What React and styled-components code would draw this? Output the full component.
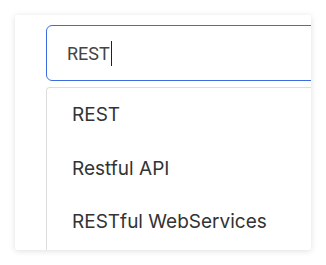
import React from "react";
import styled, { createGlobalStyle } from "styled-components";

const Global = createGlobalStyle`
  html, body { margin: 0; padding: 0; background: #ffffff; }
  body { font-family: "Inter", "Roboto", sans-serif; }
`;

const Page = styled.div`
  width: 326px;
  height: 265px;
  padding: 15px;
  box-sizing: border-box;
`;

const Card = styled.div`
  width: 296px;
  height: 235px;
  background: #fff;
  border-radius: 2px;
  box-shadow: 0 1px 6px rgba(0, 0, 0, 0.13);
  overflow: hidden;
  padding: 10px 0 0 31px;
  box-sizing: border-box;
  display: flex;
  flex-direction: column;
  gap: 6px;
`;

const InputBox = styled.div`
  flex: none;
  width: 320px;
  height: 56px;
  box-sizing: border-box;
  border: 1px solid #3d6ce0;
  border-radius: 6px;
  padding-left: 20px;
  display: flex;
  align-items: center;
  font-family: "Roboto", sans-serif;
  font-size: 18px;
  color: #444;
`;

const Caret = styled.span`
  display: inline-block;
  width: 1px;
  height: 25px;
  background: #222;
  margin-left: 1px;
`;

const List = styled.ul`
  flex: 1;
  margin: 0;
  padding: 0;
  list-style: none;
  width: 320px;
  border: 1px solid #dddddd;
  border-bottom: none;
  border-top-left-radius: 4px;
  box-sizing: border-box;
`;

const Item = styled.li`
  height: 53.5px;
  display: flex;
  align-items: center;
  padding-left: 25px;
  font-family: "Inter", sans-serif;
  font-size: 19px;
  color: #333;
`;

const items = ["REST", "Restful API", "RESTful WebServices"];

export default function App() {
  return (
    <>
      <Global />
      <Page>
        <Card>
          <InputBox>
            REST
            <Caret />
          </InputBox>
          <List>
            {items.map((t) => (
              <Item key={t}>{t}</Item>
            ))}
          </List>
        </Card>
      </Page>
    </>
  );
}
